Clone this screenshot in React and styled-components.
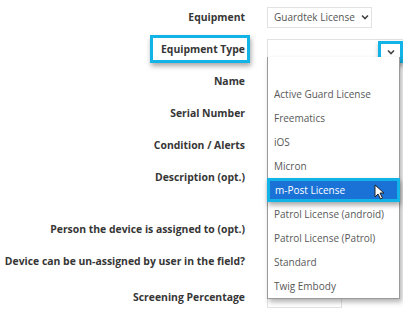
import React from 'react'
import styled, { createGlobalStyle } from 'styled-components';

const GlobalStyle = createGlobalStyle`
  html, body {
    margin: 0;
    padding: 0;
    background: #ffffff;
  }
  body {
    font-family: "Open Sans", "Liberation Sans", sans-serif;
    width: 403px;
    height: 320px;
    overflow: hidden;
  }
`;

const Page = styled.div`
  position: relative;
  width: 403px;
  height: 320px;
  padding-top: 1px;
  box-sizing: border-box;
`;

const Row = styled.div`
  display: grid;
  grid-template-columns: 245px 1fr;
  column-gap: 22px;
  align-items: ${p => (p.$top ? 'start' : 'center')};
  height: ${p => p.$h || 32}px;
`;

const Label = styled.div`
  text-align: right;
  font-size: 10.4px;
  font-weight: 700;
  color: #363636;
  line-height: 16px;
  padding-top: ${p => p.$pt || 0}px;
  white-space: nowrap;
`;

const Marked = styled.span`
  display: inline-block;
  position: relative;
  padding: 3px 2px 3px 8px;
  margin: -6px -5px -6px 0;
  border: 3px solid #12b3e6;
  box-shadow: 1px 3px 5px rgba(0, 0, 0, 0.35);
`;

const Select = styled.div`
  position: relative;
  box-sizing: border-box;
  width: ${p => p.$w}px;
  height: 21px;
  border: 1px solid #e2e2e2;
  display: flex;
  align-items: center;
  padding-left: 6px;
  font-size: 10px;
  color: #555;
  gap: 6px;
  white-space: nowrap;
`;

const Chevron = () => (
  <svg width="8" height="6" viewBox="0 0 8 6">
    <path d="M1 1.5 L4 4.5 L7 1.5" fill="none" stroke="#444" strokeWidth="1.6" />
  </svg>
);

const ChevronMark = styled.span`
  position: absolute;
  left: 110px;
  top: 1px;
  width: 19px;
  height: 16px;
  border: 3px solid #12b3e6;
  box-shadow: 1px 3px 5px rgba(0, 0, 0, 0.35);
  display: flex;
  align-items: center;
  justify-content: center;
  background: #fff;
`;

const Input = styled.div`
  box-sizing: border-box;
  width: ${p => p.$w}px;
  height: ${p => p.$h || 21}px;
  border: 1px solid #e2e2e2;
`;

const Menu = styled.ul`
  position: absolute;
  left: 267px;
  top: 57px;
  width: 133px;
  margin: 0;
  padding: 1px 0 0;
  list-style: none;
  background: #fff;
  border: 1px solid #9a9a9a;
  border-top: none;
  box-sizing: border-box;
  box-shadow: 2px 3px 5px rgba(0, 0, 0, 0.3);
`;

const Item = styled.li`
  position: relative;
  height: 24px;
  line-height: 24px;
  padding-left: 6px;
  font-size: 10px;
  color: #585858;
  white-space: nowrap;
  box-sizing: border-box;
  ${p => p.$active && `
    background: #1b72d6;
    color: #fff;
    border: 3px solid #12b3e6;
    line-height: 18px;
    padding-left: 5px;
    margin: 0 -1px;
    box-shadow: 1px 3px 5px rgba(0, 0, 0, 0.35);
  `}
`;

const Cursor = styled.svg`
  position: absolute;
  left: 104px;
  top: 3px;
`;

const options = [
  '',
  'Active Guard License',
  'Freematics',
  'iOS',
  'Micron',
  'm-Post License',
  'Patrol License (android)',
  'Patrol License (Patrol)',
  'Standard',
  'Twig Embody',
];

const App = () => {
  return (
    <Page>
      <GlobalStyle />
      <Row>
        <Label>Equipment</Label>
        <Select $w={105}>Guardtek License <Chevron /></Select>
      </Row>
      <Row>
        <Label><Marked>Equipment Type</Marked></Label>
        <Select $w={140}>
          <ChevronMark><Chevron /></ChevronMark>
        </Select>
      </Row>
      <Row>
        <Label>Name</Label>
        <Input $w={130} />
      </Row>
      <Row>
        <Label>Serial Number</Label>
        <Input $w={130} />
      </Row>
      <Row>
        <Label>Condition / Alerts</Label>
        <Input $w={130} />
      </Row>
      <Row $h={52} $top>
        <Label $pt={8}>Description (opt.)</Label>
        <Input $w={130} $h={44} />
      </Row>
      <Row>
        <Label>Person the device is assigned to (opt.)</Label>
        <Input $w={130} />
      </Row>
      <Row>
        <Label>Device can be un-assigned by user in the field?</Label>
        <Input $w={14} $h={14} />
      </Row>
      <Row $h={40}>
        <Label>Screening Percentage</Label>
        <Input $w={75} />
      </Row>

      <Menu>
        {options.map((o, i) => (
          <Item key={i} $active={o === 'm-Post License'}>
            {o}
            {o === 'm-Post License' && (
              <Cursor width="11" height="16" viewBox="0 0 11 16">
                <path d="M1 1 L1 13 L4 10 L6.5 15 L8.5 14 L6 9 L10 9 Z" fill="#fff" stroke="#222" strokeWidth="1" />
              </Cursor>
            )}
          </Item>
        ))}
      </Menu>
    </Page>
  );
};

export default App
